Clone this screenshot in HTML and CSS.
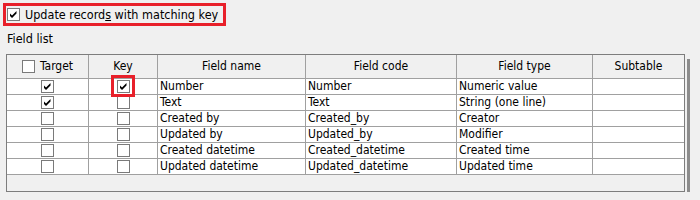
FILE: index.html
```html
<!DOCTYPE html>
<html lang="en">
<head>
    <meta charset="UTF-8">
    <title>Field list</title>
    <link rel="stylesheet" href="styles.css">
</head>
<body>
    <label class="option">
        <span class="cb"><svg viewBox="0 0 11 11"><path d="M2 4.5 L4 6.5 L8.5 2 L8.5 4.5 L4 9 L2 7 Z"/></svg></span>
        <span>Update record<u>s</u> with matching key</span>
    </label>
    <div class="caption">Field list</div>
    <div class="grid">
        <div class="row head">
            <div class="cell center"><span class="cb"></span>Target</div>
            <div class="cell center">Key</div>
            <div class="cell center">Field name</div>
            <div class="cell center">Field code</div>
            <div class="cell center">Field type</div>
            <div class="cell center last">Subtable</div>
        </div>
        <div class="row">
            <div class="cell center"><span class="cb"><svg viewBox="0 0 11 11"><path d="M2 4.5 L4 6.5 L8.5 2 L8.5 4.5 L4 9 L2 7 Z"/></svg></span></div>
            <div class="cell center"><span class="cb marked"><svg viewBox="0 0 11 11"><path d="M2 4.5 L4 6.5 L8.5 2 L8.5 4.5 L4 9 L2 7 Z"/></svg></span></div>
            <div class="cell">Number</div>
            <div class="cell">Number</div>
            <div class="cell">Numeric value</div>
            <div class="cell last"></div>
        </div>
        <div class="row">
            <div class="cell center"><span class="cb"><svg viewBox="0 0 11 11"><path d="M2 4.5 L4 6.5 L8.5 2 L8.5 4.5 L4 9 L2 7 Z"/></svg></span></div>
            <div class="cell center"><span class="cb"></span></div>
            <div class="cell">Text</div>
            <div class="cell">Text</div>
            <div class="cell">String (one line)</div>
            <div class="cell last"></div>
        </div>
        <div class="row">
            <div class="cell center"><span class="cb"></span></div>
            <div class="cell center"><span class="cb"></span></div>
            <div class="cell">Created by</div>
            <div class="cell">Created_by</div>
            <div class="cell">Creator</div>
            <div class="cell last"></div>
        </div>
        <div class="row">
            <div class="cell center"><span class="cb"></span></div>
            <div class="cell center"><span class="cb"></span></div>
            <div class="cell">Updated by</div>
            <div class="cell">Updated_by</div>
            <div class="cell">Modifier</div>
            <div class="cell last"></div>
        </div>
        <div class="row">
            <div class="cell center"><span class="cb"></span></div>
            <div class="cell center"><span class="cb"></span></div>
            <div class="cell">Created datetime</div>
            <div class="cell">Created_datetime</div>
            <div class="cell">Created time</div>
            <div class="cell last"></div>
        </div>
        <div class="row">
            <div class="cell center"><span class="cb"></span></div>
            <div class="cell center"><span class="cb"></span></div>
            <div class="cell">Updated datetime</div>
            <div class="cell">Updated_datetime</div>
            <div class="cell">Updated time</div>
            <div class="cell last"></div>
        </div>
        <div class="filler"></div>
    </div>
</body>
</html>
```

FILE: styles.css
```css
body {
    margin: 0;
    background-color: #f0f0f0;
    font-family: "DejaVu Sans Condensed", "Liberation Sans", sans-serif;
    font-size: 12px;
    color: #000;
}
.option {
    display: inline-flex;
    align-items: center;
    gap: 5px;
    box-sizing: border-box;
    margin: 3px 0 0 3px;
    padding: 0 5px 0 1px;
    height: 23px;
    border: 3px solid #e8202a;
    font-size: 12.5px;
}
.caption {
    margin: 5px 0 0 7px;
    line-height: 15px;
    font-size: 12.5px;
}
.cb {
    display: inline-block;
    box-sizing: border-box;
    width: 13px;
    height: 13px;
    border: 1px solid #7a7a7a;
    background-color: #fff;
    vertical-align: middle;
}
.cb svg {
    display: block;
    width: 11px;
    height: 11px;
}
.cb svg path {
    fill: #000;
}
.cb.marked {
    position: relative;
}
.cb.marked::after {
    content: "";
    position: absolute;
    top: -6px;
    left: -7px;
    right: -6px;
    bottom: -5px;
    border: 3px solid #e8202a;
}
.grid {
    margin: 8px 0 0 6px;
    width: 677px;
    border: 1px solid #7d7d7d;
    box-shadow: 2px 2px 0 #f0f0f0, 5px 5px 0 #8c8c8c;
}
.row {
    display: grid;
    grid-template-columns: 82px 69px 148px 151px 136px 91px;
    background-color: #fff;
}
.cell {
    box-sizing: border-box;
    height: 16px;
    padding-left: 2px;
    line-height: 15px;
    border-right: 1px solid #a0a0a0;
    border-bottom: 1px solid #a0a0a0;
    white-space: nowrap;
    overflow: hidden;
}
.cell.last {
    border-right: none;
}
.cell.center {
    display: flex;
    align-items: center;
    justify-content: center;
    padding-left: 0;
    overflow: visible;
}
.head {
    background-color: #f0f0f0;
}
.head .cell {
    height: 24px;
    line-height: 23px;
}
.head .cb {
    margin-right: 5px;
}
.filler {
    height: 16px;
    background-color: #f0f0f0;
}
```
